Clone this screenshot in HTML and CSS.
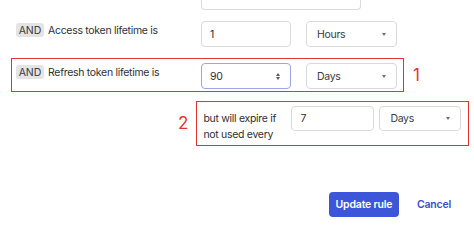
FILE: index.html
```
<!DOCTYPE html>
<html>
<head>
<meta charset="utf-8">
<link rel="stylesheet" href="styles.css">
</head>
<body>
<div class="page">
  <div class="top-row">
    <div class="field field-wide field-cut"></div>
  </div>

  <div class="rule-row row-first">
    <div class="rule">
      <div class="cond"><span class="badge">AND</span><span class="label">Access token lifetime is</span></div>
      <div class="field field-num">1</div>
      <div class="select">Hours<span class="caret"></span></div>
    </div>
  </div>

  <div class="rule-row row-second">
    <div class="rule rule-marked">
      <div class="cond"><span class="badge">AND</span><span class="label">Refresh token lifetime is</span></div>
      <div class="field field-num field-focus">90<span class="spinner"><span class="up"></span><span class="down"></span></span></div>
      <div class="select">Days<span class="caret"></span></div>
    </div>
    <span class="marker">1</span>
  </div>

  <div class="sub-row">
    <span class="marker">2</span>
    <div class="sub-box">
      <div class="sub-label">but will expire if<br>not used every</div>
      <div class="field field-sub">7</div>
      <div class="select select-sub">Days<span class="caret"></span></div>
    </div>
  </div>

  <div class="actions">
    <button class="btn-primary">Update rule</button>
    <button class="btn-link">Cancel</button>
  </div>
</div>
</body>
</html>
```

FILE: styles.css
```
* { box-sizing: border-box; }
html, body { margin: 0; background: #ffffff; }
body {
  font-family: Inter, "Noto Sans", "Liberation Sans", sans-serif;
  font-size: 10.5px;
  letter-spacing: -0.3px;
  color: #2f2f33;
  width: 474px;
  height: 231px;
  overflow: hidden;
}
.page { display: flex; flex-direction: column; }

.top-row { display: flex; padding-left: 201px; }
.field {
  border: 1px solid #dadadd;
  border-radius: 4px;
  height: 26px;
  padding: 0 8px;
  display: flex;
  align-items: center;
  background: #fff;
  position: relative;
}
.field-wide { width: 160px; }
.field-cut { height: 10px; border-top: none; border-radius: 0 0 4px 4px; }

.rule-row { display: flex; align-items: center; }
.row-first { margin-top: 7px; }
.row-second { margin-top: 8px; }
.rule {
  margin-left: 11px;
  width: 393px;
  display: flex;
  align-items: flex-start;
  border: 1px solid #ffffff;
  padding: 3px 6px 2px 4px;
}
.rule.rule-marked { border: 1px solid #e2372c; padding-top: 4px; }
.cond { width: 185px; display: flex; align-items: center; margin-top: 2px; }
.badge {
  background: #e4e4e6;
  border-radius: 3px;
  height: 14px;
  width: 28px;
  display: inline-flex;
  align-items: center;
  justify-content: center;
  font-size: 10.5px;
  letter-spacing: 0;
  color: #3a3a3e;
  margin-right: 4px;
}
.label { color: #2f2f33; }
.field-num { width: 90px; margin-right: 15px; }
.field-focus { border-color: #9aa5e8; }
.spinner {
  position: absolute;
  right: 10px;
  top: 9px;
  display: flex;
  flex-direction: column;
  gap: 1px;
}
.spinner .up { width: 0; height: 0; border-left: 2.5px solid transparent; border-right: 2.5px solid transparent; border-bottom: 3px solid #55555a; }
.spinner .down { width: 0; height: 0; border-left: 2.5px solid transparent; border-right: 2.5px solid transparent; border-top: 3px solid #55555a; }

.select {
  width: 91px;
  height: 26px;
  border: 1px solid #dadadd;
  border-radius: 4px;
  padding: 0 10px;
  display: flex;
  align-items: center;
  justify-content: space-between;
  color: #3a3a3e;
}
.caret { width: 0; height: 0; border-left: 2.5px solid transparent; border-right: 2.5px solid transparent; border-top: 3px solid #707075; }

.marker { color: #e2372c; font-size: 17px; margin-left: 9px; line-height: 1; letter-spacing: 0; }

.sub-row { display: flex; align-items: center; padding-left: 178px; margin-top: 9px; }
.sub-row .marker { margin-left: 0; margin-right: 8px; }
.sub-box {
  width: 273px;
  border: 1px solid #e2372c;
  display: flex;
  align-items: flex-start;
  padding: 4px 7px 2px 6px;
}
.sub-label { width: 88px; line-height: 16px; padding-top: 5px; color: #2f2f33; }
.field-sub { width: 83px; margin-right: 5px; height: 25px; }
.select-sub { width: 82px; height: 25px; }

.actions { display: flex; justify-content: flex-end; align-items: center; padding-right: 23px; margin-top: 46px; gap: 18px; }
.btn-primary {
  font-family: inherit;
  background: #3d55d8;
  color: #fff;
  border: none;
  border-radius: 4px;
  height: 25px;
  width: 70px;
  font-size: 10.5px;
  letter-spacing: -0.2px;
  font-weight: 600;
  padding: 0;
}
.btn-link {
  font-family: inherit;
  background: none;
  border: none;
  color: #3a4fc6;
  font-size: 10.5px;
  letter-spacing: -0.2px;
  font-weight: 600;
  padding: 0;
}
```
